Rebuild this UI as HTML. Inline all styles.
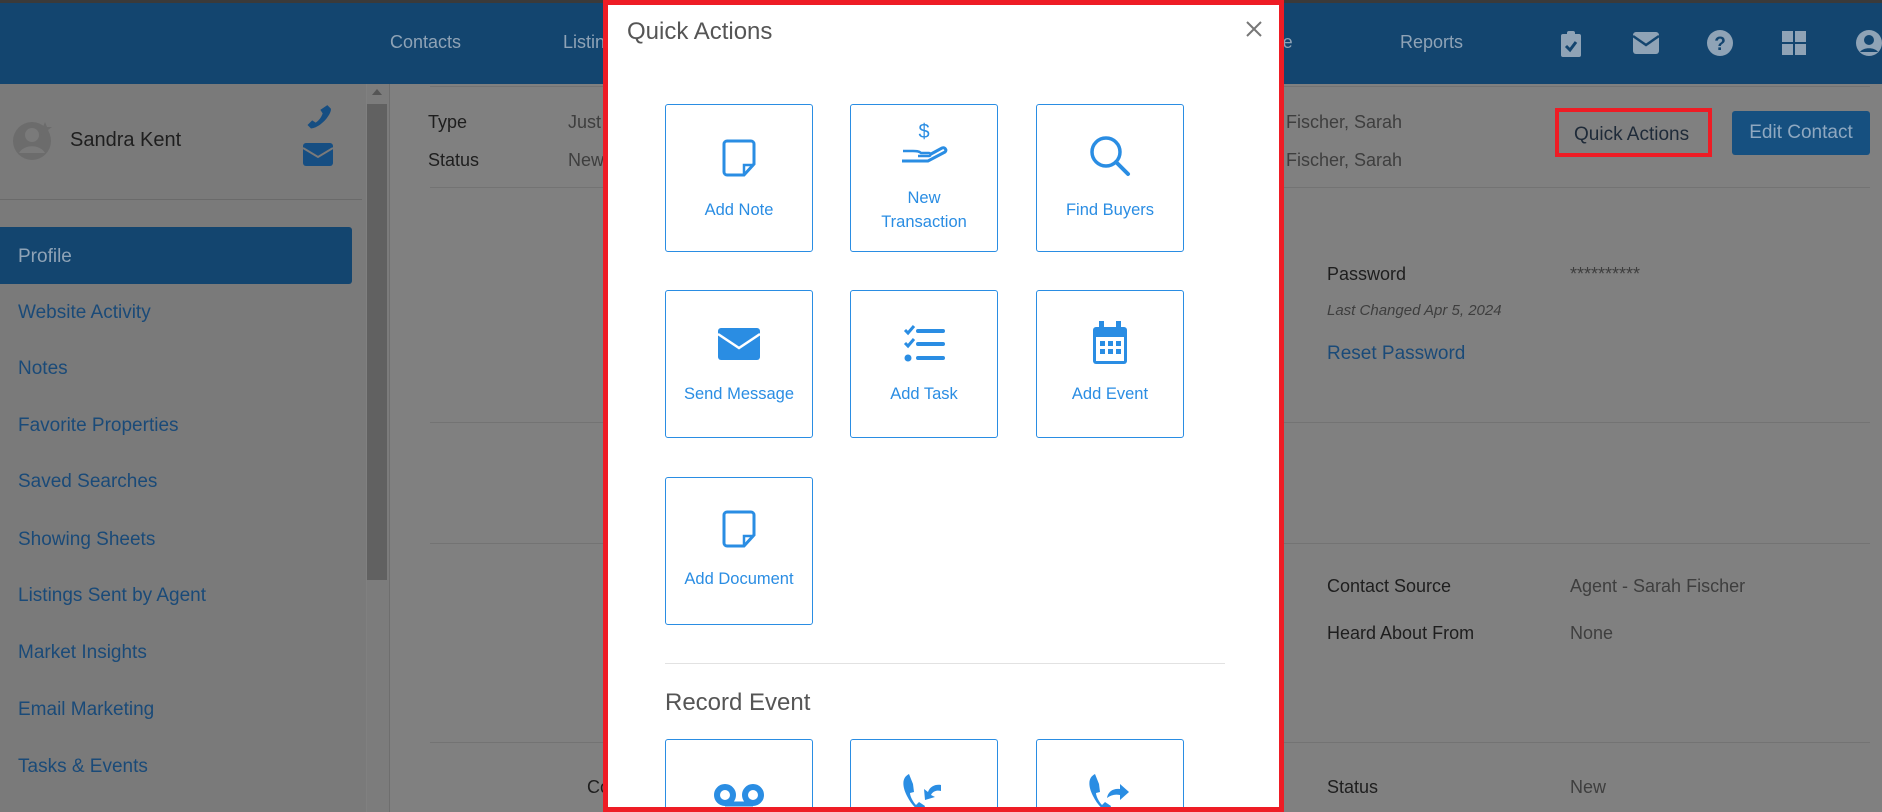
<!DOCTYPE html>
<html><head><meta charset="utf-8"><style>
*{margin:0;padding:0;box-sizing:border-box}
html,body{width:1882px;height:812px;overflow:hidden}
body{background:#808080;font-family:"Liberation Sans",sans-serif;position:relative}
.a{position:absolute;white-space:nowrap}
.nav{left:0;top:0;width:1882px;height:84px;background:#13456f;border-top:3px solid #3a3a3a}
.nt{color:#8fa3b6;font-size:18px;top:32px}
.side{left:0;top:84px;width:366px;height:728px;background:#7a7a7a}
.si{left:18px;color:#1a4a78;font-size:19px}
.lbl{color:#1e1e1e;font-size:18px}
.val{color:#3e3e3e;font-size:18px}
.hr{height:1px;background:#737373}
.tile{position:absolute;width:148px;height:148px;border:1.5px solid #2a8de3;border-radius:3px;background:#fff;color:#2a8de3;font-size:16.5px;text-align:center;overflow:hidden}
.tile svg{position:absolute;left:50%;transform:translateX(-50%)}
.tile .t{position:absolute;left:0;right:0;line-height:24px}
</style></head><body>
<div class="a nav"></div>
<div class="a nt" style="left:390px">Contacts</div>
<div class="a nt" style="left:563px">Listings</div>
<div class="a nt" style="left:1228px">Website</div>
<div class="a nt" style="left:1400px">Reports</div>
<svg class="a" style="left:1559px;top:30px" width="24" height="28" viewBox="0 0 24 28"><rect x="2" y="4" width="20" height="23" rx="2" fill="#8fa3b6"/><rect x="8" y="1" width="8" height="6" rx="2" fill="#8fa3b6"/><path d="M7 16l4 4 6-8" stroke="#13456f" stroke-width="3" fill="none"/></svg>
<svg class="a" style="left:1633px;top:32px" width="26" height="22" viewBox="0 0 26 22"><rect x="0" y="0" width="26" height="22" rx="3" fill="#8fa3b6"/><path d="M0 4l13 9 13-9" stroke="#13456f" stroke-width="2.5" fill="none"/></svg>
<svg class="a" style="left:1707px;top:30px" width="26" height="26" viewBox="0 0 26 26"><circle cx="13" cy="13" r="13" fill="#8fa3b6"/><text x="13" y="20" font-size="19" font-weight="bold" text-anchor="middle" fill="#13456f" font-family="Liberation Sans">?</text></svg>
<svg class="a" style="left:1782px;top:31px" width="24" height="24" viewBox="0 0 24 24" fill="#8fa3b6"><rect x="0" y="0" width="11" height="11"/><rect x="13" y="0" width="11" height="11"/><rect x="0" y="13" width="11" height="11"/><rect x="13" y="13" width="11" height="11"/></svg>
<svg class="a" style="left:1855px;top:29px" width="27" height="28" viewBox="0 0 27 28"><circle cx="14" cy="14" r="13" fill="#8fa3b6"/><circle cx="14" cy="11" r="5" fill="#13456f"/><path d="M5 23c3-5 15-5 18 0" fill="#13456f"/></svg>

<div class="a side"></div>
<svg class="a" style="left:12px;top:120px" width="48" height="42" viewBox="0 0 48 42"><circle cx="20" cy="21" r="19" fill="#6c6c6c"/><circle cx="20" cy="15" r="7" fill="#7a7a7a"/><path d="M7 33c5-9 21-9 26 0" fill="#7a7a7a"/><path d="M33 2l2 5 5 0-4 3 2 5-5-3-4 3 1-5-4-3 5 0z" fill="#6c6c6c"/></svg>
<div class="a" style="left:70px;top:129px;font-size:20px;color:#1e1e1e">Sandra Kent</div>
<svg class="a" style="left:304px;top:104px" width="28" height="28" viewBox="0 0 24 24"><path d="M20 1l3 3c1 4-8 16-17 17l-3-3 4-4 3 2c3-2 5-5 6-8l-2-3z" fill="#164e82"/></svg>
<svg class="a" style="left:303px;top:143px" width="30" height="23" viewBox="0 0 30 23"><rect width="30" height="23" rx="3" fill="#164e82"/><path d="M0 5l15 9 15-9" stroke="#7a7a7a" stroke-width="2" fill="none"/></svg>
<div class="a" style="left:0;top:199px;width:362px;height:1px;background:#6a6a6a"></div>
<div class="a" style="left:0;top:227px;width:352px;height:57px;background:#13456f;border-radius:0 3px 3px 0"></div>
<div class="a si" style="top:246px;color:#8fa3b6">Profile</div>
<div class="a si" style="top:302px">Website Activity</div>
<div class="a si" style="top:358px">Notes</div>
<div class="a si" style="top:415px">Favorite Properties</div>
<div class="a si" style="top:471px">Saved Searches</div>
<div class="a si" style="top:529px">Showing Sheets</div>
<div class="a si" style="top:585px">Listings Sent by Agent</div>
<div class="a si" style="top:642px">Market Insights</div>
<div class="a si" style="top:699px">Email Marketing</div>
<div class="a si" style="top:756px">Tasks &amp; Events</div>
<div class="a" style="left:367px;top:84px;width:22px;height:728px;background:#7c7c7c"></div>
<div class="a" style="left:367px;top:104px;width:20px;height:476px;background:#616161"></div>
<div class="a" style="left:372px;top:89px;width:0;height:0;border:5px solid transparent;border-bottom:6px solid #555;border-top:0"></div>
<div class="a" style="left:389px;top:84px;width:1px;height:728px;background:#6e6e6e"></div>

<div class="a hr" style="left:430px;top:86px;width:1440px"></div>
<div class="a lbl" style="left:428px;top:112px">Type</div>
<div class="a lbl" style="left:428px;top:150px">Status</div>
<div class="a val" style="left:568px;top:112px">Just</div>
<div class="a val" style="left:568px;top:150px">New</div>
<div class="a val" style="left:1286px;top:112px">Fischer, Sarah</div>
<div class="a val" style="left:1286px;top:150px">Fischer, Sarah</div>
<div class="a" style="left:1555px;top:108px;width:157px;height:49px;border:4px solid #ee1c25"></div>
<div class="a" style="left:1574px;top:124px;font-size:19px;color:#1e2a38">Quick Actions</div>
<div class="a" style="left:1732px;top:111px;width:138px;height:44px;background:#165080;border-radius:3px;color:#8fa8c0;font-size:19px;text-align:center;line-height:44px">Edit Contact</div>
<div class="a hr" style="left:430px;top:187px;width:1440px"></div>
<div class="a lbl" style="left:1327px;top:264px">Password</div>
<div class="a val" style="left:1570px;top:264px">**********</div>
<div class="a" style="left:1327px;top:302px;font-size:15px;font-style:italic;color:#3e3e3e">Last Changed Apr 5, 2024</div>
<div class="a" style="left:1327px;top:343px;font-size:19px;color:#1a4a78">Reset Password</div>
<div class="a hr" style="left:430px;top:422px;width:1440px"></div>
<div class="a hr" style="left:430px;top:543px;width:1440px"></div>
<div class="a lbl" style="left:1327px;top:576px">Contact Source</div>
<div class="a val" style="left:1570px;top:576px">Agent - Sarah Fischer</div>
<div class="a lbl" style="left:1327px;top:623px">Heard About From</div>
<div class="a val" style="left:1570px;top:623px">None</div>
<div class="a hr" style="left:430px;top:742px;width:1440px"></div>
<div class="a lbl" style="left:587px;top:777px">Contact</div>
<div class="a lbl" style="left:1327px;top:777px">Status</div>
<div class="a val" style="left:1570px;top:777px">New</div>

<div class="a" style="left:603px;top:0;width:681px;height:812px;background:#fff;border:5px solid #ee1c25;overflow:hidden">
<div class="a" style="left:19px;top:13px;font-size:24px;color:#555">Quick Actions</div>
<svg class="a" style="left:638px;top:16px" width="16" height="16" viewBox="0 0 16 16"><path d="M1 1l14 14M15 1L1 15" stroke="#777" stroke-width="2"/></svg>

<div class="tile" style="left:57px;top:99px"><svg style="top:33px" width="36" height="40" viewBox="0 0 36 40"><path d="M6 3h24a3 3 0 0 1 3 3v20l-10 11H6a3 3 0 0 1-3-3V6a3 3 0 0 1 3-3z" fill="none" stroke="#2a8de3" stroke-width="3"/><path d="M23 37V27h10" fill="none" stroke="#2a8de3" stroke-width="2.5"/></svg><div class="t" style="top:93px">Add Note</div></div>
<div class="tile" style="left:242px;top:99px"><svg style="top:15px" width="50" height="46" viewBox="0 0 50 46"><text x="25" y="18" font-size="20" text-anchor="middle" fill="#2a8de3" font-family="Liberation Sans">$</text><path d="M4 31h10c3 0 6 0 8 2h8c2 0 2 3 0 3H19" fill="none" stroke="#2a8de3" stroke-width="2.5"/><path d="M3 41h26l17-9c2-2 0-5-3-4l-11 6" fill="none" stroke="#2a8de3" stroke-width="3"/></svg><div class="t" style="top:81px">New<br>Transaction</div></div>
<div class="tile" style="left:428px;top:99px"><svg style="top:29px" width="44" height="44" viewBox="0 0 44 44"><circle cx="18" cy="18" r="14" fill="none" stroke="#2a8de3" stroke-width="3.5"/><path d="M28 28l12 12" stroke="#2a8de3" stroke-width="4" stroke-linecap="round"/></svg><div class="t" style="top:93px">Find Buyers</div></div>

<div class="tile" style="left:57px;top:285px"><svg style="top:37px" width="42" height="32" viewBox="0 0 42 32"><rect width="42" height="32" rx="3" fill="#2a8de3"/><path d="M0 6l21 14 21-14" stroke="#fff" stroke-width="2.5" fill="none"/></svg><div class="t" style="top:91px">Send Message</div></div>
<div class="tile" style="left:242px;top:285px"><svg style="top:34px" width="44" height="40" viewBox="0 0 44 40"><path d="M3 5l3 3 6-7M3 18l3 3 6-7" stroke="#2a8de3" stroke-width="3" fill="none"/><circle cx="6" cy="33" r="3.5" fill="#2a8de3"/><path d="M16 6h25M16 19h25M16 33h25" stroke="#2a8de3" stroke-width="4" stroke-linecap="round"/></svg><div class="t" style="top:91px">Add Task</div></div>
<div class="tile" style="left:428px;top:285px"><svg style="top:30px" width="36" height="44" viewBox="0 0 36 44"><rect x="1" y="6" width="34" height="37" rx="3" fill="#2a8de3"/><rect x="7" y="0" width="5" height="10" fill="#2a8de3"/><rect x="24" y="0" width="5" height="10" fill="#2a8de3"/><rect x="4" y="16" width="28" height="24" fill="#fff"/><g fill="#2a8de3"><rect x="8" y="20" width="5" height="5"/><rect x="16" y="20" width="5" height="5"/><rect x="24" y="20" width="5" height="5"/><rect x="8" y="28" width="5" height="5"/><rect x="16" y="28" width="5" height="5"/><rect x="24" y="28" width="5" height="5"/></g></svg><div class="t" style="top:91px">Add Event</div></div>

<div class="tile" style="left:57px;top:472px"><svg style="top:31px" width="36" height="40" viewBox="0 0 36 40"><path d="M6 3h24a3 3 0 0 1 3 3v20l-10 11H6a3 3 0 0 1-3-3V6a3 3 0 0 1 3-3z" fill="none" stroke="#2a8de3" stroke-width="3"/><path d="M23 37V27h10" fill="none" stroke="#2a8de3" stroke-width="2.5"/></svg><div class="t" style="top:89px">Add Document</div></div>

<div class="a" style="left:57px;top:658px;width:560px;height:1px;background:#e2e2e2"></div>
<div class="a" style="left:57px;top:684px;font-size:24px;color:#555">Record Event</div>

<div class="tile" style="left:57px;top:734px;height:68px;border-bottom:none;border-radius:3px 3px 0 0"><svg style="top:43px" width="50" height="24" viewBox="0 0 50 24"><circle cx="11" cy="12" r="8" fill="none" stroke="#2a8de3" stroke-width="6"/><circle cx="39" cy="12" r="8" fill="none" stroke="#2a8de3" stroke-width="6"/><path d="M11 21h28" stroke="#2a8de3" stroke-width="5"/></svg></div>
<div class="tile" style="left:242px;top:734px;height:68px;border-bottom:none;border-radius:3px 3px 0 0"><svg style="top:34px" width="46" height="40" viewBox="0 0 46 40"><path d="M8 0c-6 3-8 10-2 22 5 10 12 16 16 16l2-6-6-4-3 3c-3-3-6-9-6-12l4-1-1-8z" fill="#2a8de3"/><path d="M40 11c-5-1-11 1-13 7l-4-3 1 11 10-3-4-2c2-4 6-5 10-4z" fill="#2a8de3"/></svg></div>
<div class="tile" style="left:428px;top:734px;height:68px;border-bottom:none;border-radius:3px 3px 0 0"><svg style="top:34px" width="46" height="40" viewBox="0 0 46 40"><path d="M8 0c-6 3-8 10-2 22 5 10 12 16 16 16l2-6-6-4-3 3c-3-3-6-9-6-12l4-1-1-8z" fill="#2a8de3"/><path d="M20 24c1-7 7-10 13-9v-5l9 8-9 8v-5c-5-1-9 0-13 3z" fill="#2a8de3"/></svg></div>
</div>
</body></html>
